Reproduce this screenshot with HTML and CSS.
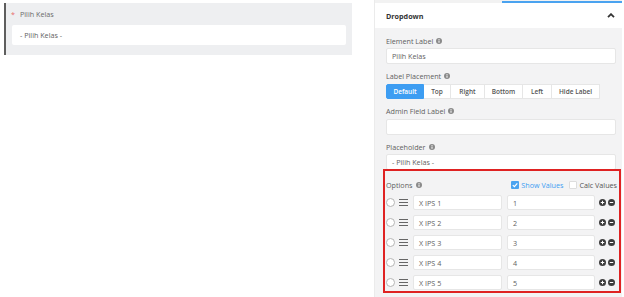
FILE: index.html
```html
<!DOCTYPE html>
<html>
<head>
<meta charset="utf-8">
<link rel="stylesheet" href="styles.css">
</head>
<body>
<div class="page">
  <div class="preview">
    <div class="preview-label"><span class="req">*</span>Pilih Kelas</div>
    <div class="preview-select">- Pilih Kelas -</div>
  </div>
  <div class="drawer">
    <div class="tabs"><div class="tab-active"></div></div>
    <div class="drawer-head">
      <span class="drawer-title">Dropdown</span>
      <svg class="chev" width="8" height="5" viewBox="0 0 8 5"><polyline points="1,4.2 4,1.2 7,4.2" fill="none" stroke="#333" stroke-width="1.8"/></svg>
    </div>
    <div class="drawer-body">
      <div class="field">
        <div class="flabel">Element Label <svg class="info" width="6" height="6" viewBox="0 0 12 12"><circle cx="6" cy="6" r="6" fill="#8a8a8a"/><rect x="5" y="5" width="2" height="4.5" fill="#fff"/><circle cx="6" cy="3.1" r="1.1" fill="#fff"/></svg></div>
        <div class="input">Pilih Kelas</div>
      </div>
      <div class="field">
        <div class="flabel lp">Label Placement <svg class="info" width="6" height="6" viewBox="0 0 12 12"><circle cx="6" cy="6" r="6" fill="#8a8a8a"/><rect x="5" y="5" width="2" height="4.5" fill="#fff"/><circle cx="6" cy="3.1" r="1.1" fill="#fff"/></svg></div>
        <div class="seg">
          <div class="seg-btn active">Default</div>
          <div class="seg-btn">Top</div>
          <div class="seg-btn">Right</div>
          <div class="seg-btn">Bottom</div>
          <div class="seg-btn">Left</div>
          <div class="seg-btn">Hide Label</div>
        </div>
      </div>
      <div class="field">
        <div class="flabel lp">Admin Field Label <svg class="info" width="6" height="6" viewBox="0 0 12 12"><circle cx="6" cy="6" r="6" fill="#8a8a8a"/><rect x="5" y="5" width="2" height="4.5" fill="#fff"/><circle cx="6" cy="3.1" r="1.1" fill="#fff"/></svg></div>
        <div class="input"></div>
      </div>
      <div class="field last">
        <div class="flabel">Placeholder <svg class="info" width="6" height="6" viewBox="0 0 12 12"><circle cx="6" cy="6" r="6" fill="#8a8a8a"/><rect x="5" y="5" width="2" height="4.5" fill="#fff"/><circle cx="6" cy="3.1" r="1.1" fill="#fff"/></svg></div>
        <div class="input">- Pilih Kelas -</div>
      </div>
      <div class="options">
        <div class="opt-head">
          <div class="flabel">Options <svg class="info" width="6" height="6" viewBox="0 0 12 12"><circle cx="6" cy="6" r="6" fill="#8a8a8a"/><rect x="5" y="5" width="2" height="4.5" fill="#fff"/><circle cx="6" cy="3.1" r="1.1" fill="#fff"/></svg></div>
          <div class="opt-checks">
            <span class="chk on"><svg width="8" height="8" viewBox="0 0 8 8"><rect width="8" height="8" rx="1" fill="#4aa3f0"/><polyline points="1.8,4.1 3.4,5.7 6.3,2.4" fill="none" stroke="#fff" stroke-width="1.2"/></svg>Show Values</span>
            <span class="chk"><span class="box"></span>Calc Values</span>
          </div>
        </div>
        <div class="rows">
          <div class="row"><span class="radio"></span><span class="handle"><i></i><i></i><i></i></span><div class="input cell lab">X IPS 1</div><div class="input cell val">1</div><span class="pm"><svg width="7" height="7" viewBox="0 0 14 14"><circle cx="7" cy="7" r="7" fill="#3d3d3d"/><rect x="3.5" y="6" width="7" height="2" fill="#fff"/><rect x="6" y="3.5" width="2" height="7" fill="#fff"/></svg><svg width="7" height="7" viewBox="0 0 14 14"><circle cx="7" cy="7" r="7" fill="#3d3d3d"/><rect x="3.5" y="6" width="7" height="2" fill="#fff"/></svg></span></div>
          <div class="row"><span class="radio"></span><span class="handle"><i></i><i></i><i></i></span><div class="input cell lab">X IPS 2</div><div class="input cell val">2</div><span class="pm"><svg width="7" height="7" viewBox="0 0 14 14"><circle cx="7" cy="7" r="7" fill="#3d3d3d"/><rect x="3.5" y="6" width="7" height="2" fill="#fff"/><rect x="6" y="3.5" width="2" height="7" fill="#fff"/></svg><svg width="7" height="7" viewBox="0 0 14 14"><circle cx="7" cy="7" r="7" fill="#3d3d3d"/><rect x="3.5" y="6" width="7" height="2" fill="#fff"/></svg></span></div>
          <div class="row"><span class="radio"></span><span class="handle"><i></i><i></i><i></i></span><div class="input cell lab">X IPS 3</div><div class="input cell val">3</div><span class="pm"><svg width="7" height="7" viewBox="0 0 14 14"><circle cx="7" cy="7" r="7" fill="#3d3d3d"/><rect x="3.5" y="6" width="7" height="2" fill="#fff"/><rect x="6" y="3.5" width="2" height="7" fill="#fff"/></svg><svg width="7" height="7" viewBox="0 0 14 14"><circle cx="7" cy="7" r="7" fill="#3d3d3d"/><rect x="3.5" y="6" width="7" height="2" fill="#fff"/></svg></span></div>
          <div class="row"><span class="radio"></span><span class="handle"><i></i><i></i><i></i></span><div class="input cell lab">X IPS 4</div><div class="input cell val">4</div><span class="pm"><svg width="7" height="7" viewBox="0 0 14 14"><circle cx="7" cy="7" r="7" fill="#3d3d3d"/><rect x="3.5" y="6" width="7" height="2" fill="#fff"/><rect x="6" y="3.5" width="2" height="7" fill="#fff"/></svg><svg width="7" height="7" viewBox="0 0 14 14"><circle cx="7" cy="7" r="7" fill="#3d3d3d"/><rect x="3.5" y="6" width="7" height="2" fill="#fff"/></svg></span></div>
          <div class="row"><span class="radio"></span><span class="handle"><i></i><i></i><i></i></span><div class="input cell lab">X IPS 5</div><div class="input cell val">5</div><span class="pm"><svg width="7" height="7" viewBox="0 0 14 14"><circle cx="7" cy="7" r="7" fill="#3d3d3d"/><rect x="3.5" y="6" width="7" height="2" fill="#fff"/><rect x="6" y="3.5" width="2" height="7" fill="#fff"/></svg><svg width="7" height="7" viewBox="0 0 14 14"><circle cx="7" cy="7" r="7" fill="#3d3d3d"/><rect x="3.5" y="6" width="7" height="2" fill="#fff"/></svg></span></div>
        </div>
      </div>
    </div>
  </div>
</div>
</body>
</html>
```
FILE: styles.css
```css
* { box-sizing: border-box; }
body {
  margin: 0;
  font-family: "Open Sans", "DejaVu Sans", sans-serif;
  font-size: 7.2px;
  color: #5f5f5f;
  background: #fff;
}
.page {
  display: flex;
  align-items: flex-start;
  height: 297px;
}
.preview {
  margin: 3px 0 0 4px;
  width: 348px;
  height: 52px;
  background: #eeeff1;
  border-left: 2px solid #5e5e5e;
  padding: 6px 6px 0 5px;
}
.preview-label {
  height: 10px;
  line-height: 10px;
  color: #6a6a6a;
}
.req { color: #e86a6a; margin-right: 5px; }
.preview-select {
  margin: 6px 0 0 1px;
  height: 20px;
  line-height: 20px;
  background: #fff;
  border-radius: 2px;
  padding-left: 8px;
  color: #5f5f5f;
}
.drawer {
  margin-left: 22px;
  width: 248px;
  height: 297px;
  display: flex;
  flex-direction: column;
  border-left: 1px solid #ebebeb;
}
.tabs {
  height: 3px;
  background: #f2f2f2;
  display: flex;
  justify-content: flex-end;
  align-items: flex-end;
}
.tab-active { width: 120px; height: 2px; background: #4aa3f0; }
.drawer-head {
  height: 25px;
  background: #fff;
  display: flex;
  align-items: center;
  justify-content: space-between;
  padding: 0 7px 0 11px;
}
.drawer-title { font-weight: 700; color: #333; }
.chev { display: block; }
.drawer-body {
  flex: 1;
  background: #f3f3f4;
  padding: 8px 6px 0 11px;
}
.field { margin-bottom: 7px; }
.field.last { margin-bottom: 0; }
.flabel {
  height: 10px;
  display: flex;
  align-items: center;
  gap: 3px;
  margin-bottom: 2px;
  color: #5f5f5f;
  white-space: nowrap;
}
.flabel.lp { margin-bottom: 3px; }
.info { display: block; }
.input {
  height: 16px;
  line-height: 15px;
  background: #fff;
  border: 1px solid #e6e6e6;
  border-radius: 2px;
  padding-left: 5px;
  color: #5f5f5f;
}
.seg {
  display: grid;
  grid-template-columns: 38px 27px 34px 38px 29px 48px;
  width: 214px;
  height: 15px;
  background: #fff;
  border-radius: 2px;
}
.seg-btn {
  display: flex;
  align-items: center;
  justify-content: center;
  border: 1px solid #e6e6e6;
  border-left: none;
  color: #555;
  font-weight: 600;
  font-size: 6.5px;
}
.seg-btn:first-child { border-left: 1px solid #e6e6e6; }
.seg-btn.active {
  background: #3d9df2;
  border-color: #3d9df2;
  color: #fff;
  border-radius: 2px 0 0 2px;
}
.options {
  margin: -1px -5px 0 -3px;
  border: 2px solid #df2222;
  padding: 9px 2px 0 1px;
  height: 124px;
}
.opt-head {
  display: flex;
  justify-content: space-between;
  align-items: center;
  height: 10px;
}
.opt-head .flabel { margin-bottom: 0; }
.opt-checks { display: flex; align-items: center; gap: 6px; }
.chk {
  display: flex;
  align-items: center;
  gap: 2px;
  color: #555;
}
.chk.on { color: #3d9df2; }
.chk svg { display: block; }
.box {
  width: 8px;
  height: 8px;
  background: #fff;
  border: 1px solid #ddd;
  border-radius: 1px;
}
.rows {
  margin-top: 5px;
  display: flex;
  flex-direction: column;
  gap: 5px;
}
.row {
  display: flex;
  align-items: center;
  height: 15px;
}
.row .input { height: 15px; line-height: 14px; }
.radio {
  width: 9px;
  height: 9px;
  border-radius: 50%;
  border: 1px solid #b5b5b5;
  background: #fff;
  margin-right: 4px;
}
.handle {
  width: 9px;
  display: flex;
  flex-direction: column;
  gap: 2px;
  margin-right: 5px;
}
.handle i {
  display: block;
  height: 1px;
  background: #666;
}
.cell { flex: none; }
.lab { width: 89px; margin-right: 5px; }
.val { width: 88px; margin-right: 4px; }
.pm { display: flex; gap: 2px; }
.pm svg { display: block; }
```
